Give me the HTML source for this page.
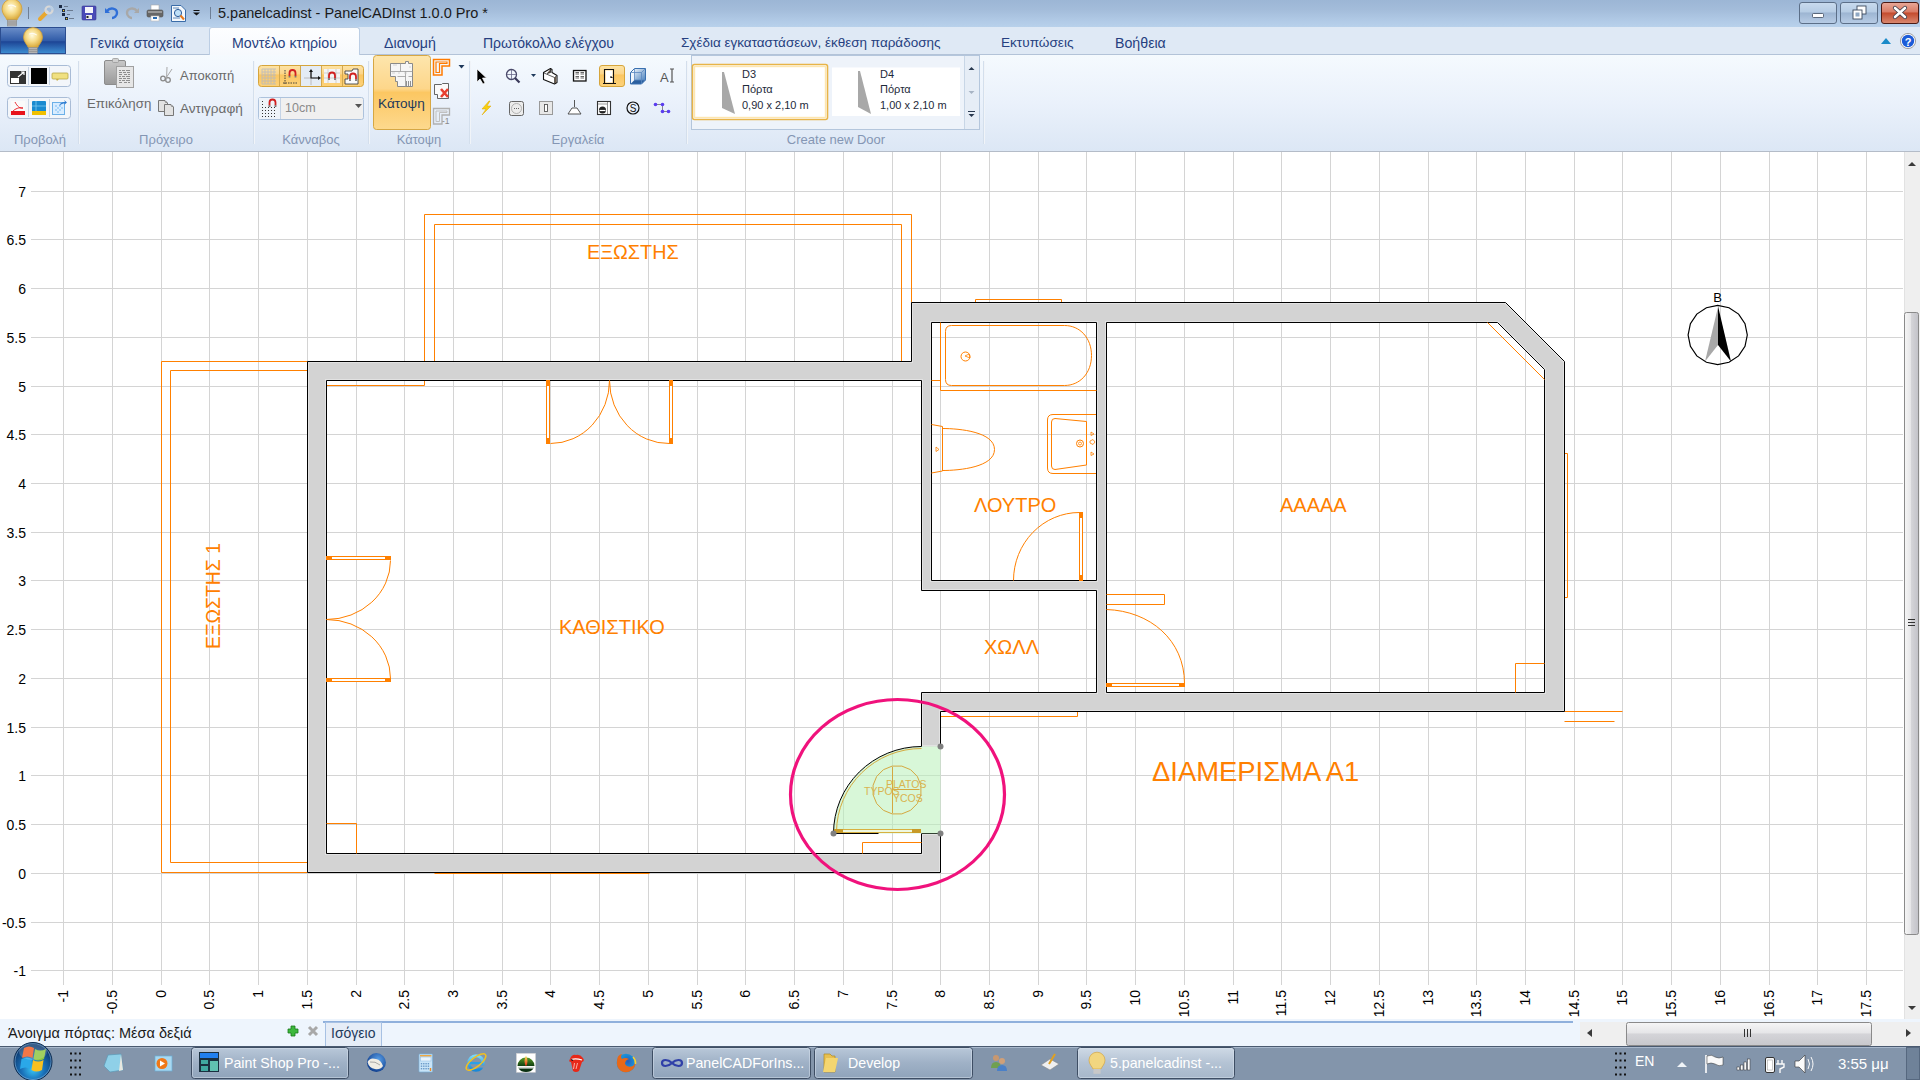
<!DOCTYPE html><html><head><meta charset="utf-8"><style>
*{margin:0;padding:0;box-sizing:border-box}
html,body{width:1920px;height:1080px;overflow:hidden;background:#fff;font-family:"Liberation Sans",sans-serif}
.abs{position:absolute}
#title{left:0;top:0;width:1920px;height:27px;background:linear-gradient(#9cb6d5,#a3bcda 35%,#b2cbe7 80%,#b8d1eb)}
#tabs{left:0;top:27px;width:1920px;height:27px;background:#dfe9f5}
#ribbon{left:0;top:54px;width:1920px;height:98px;background:linear-gradient(#f5fafe,#eaf1fb 50%,#dce7f5);border-top:1px solid #b3c3d8;border-bottom:1px solid #b4bcc8}
.tab{position:absolute;top:35px;font-size:14.2px;color:#263f80;white-space:nowrap}
.glabel{position:absolute;top:132px;font-size:13px;color:#8496b4;white-space:nowrap}
.sep{position:absolute;top:61px;width:2px;height:83px;background:linear-gradient(90deg,#c5d4e6,#fff)}
#canvas{left:0;top:152px;width:1920px;height:867px;background:#fff}
#status{left:0;top:1019px;width:1920px;height:27px;background:#eef5fd}
#taskbar{left:0;top:1046px;width:1920px;height:34px;background:#8395ab}
.tb{position:absolute;top:1047px;height:32px;border:1px solid #4d5f78;border-radius:3px;background:linear-gradient(#b0c0d2,#96aac0 45%,#8aa0b8);box-shadow:inset 0 0 0 1px rgba(255,255,255,.35)}
.tbt{position:absolute;top:1055px;font-size:14.2px;color:#fff;white-space:nowrap}
.rt{font-size:12.5px;color:#333;white-space:nowrap;position:absolute}
</style></head><body>
<div id="title" class="abs"></div>
<div id="tabs" class="abs"></div>
<div id="ribbon" class="abs"></div>
<div id="canvas" class="abs"></div>
<div id="status" class="abs"></div>
<div id="taskbar" class="abs"></div>
<svg class="abs" style="left:0;top:0" width="1920" height="1080" viewBox="0 0 1920 1080"><path d="M63.5 152V985M112.5 152V985M161.5 152V985M209.5 152V985M258.5 152V985M307.5 152V985M356.5 152V985M404.5 152V985M453.5 152V985M502.5 152V985M550.5 152V985M599.5 152V985M648.5 152V985M697.5 152V985M745.5 152V985M794.5 152V985M843.5 152V985M892.5 152V985M940.5 152V985M989.5 152V985M1038.5 152V985M1086.5 152V985M1135.5 152V985M1184.5 152V985M1233.5 152V985M1281.5 152V985M1330.5 152V985M1379.5 152V985M1428.5 152V985M1476.5 152V985M1525.5 152V985M1574.5 152V985M1622.5 152V985M1671.5 152V985M1720.5 152V985M1769.5 152V985M1817.5 152V985M1866.5 152V985M31 970.5H1903M31 922.5H1903M31 873.5H1903M31 824.5H1903M31 775.5H1903M31 727.5H1903M31 678.5H1903M31 629.5H1903M31 580.5H1903M31 532.5H1903M31 483.5H1903M31 434.5H1903M31 386.5H1903M31 337.5H1903M31 288.5H1903M31 239.5H1903M31 191.5H1903" stroke="#d4d4d4" stroke-width="1" fill="none"/><text x="26" y="975.5" font-size="14" text-anchor="end" fill="#000" font-family="Liberation Sans">-1</text><text x="26" y="927.5" font-size="14" text-anchor="end" fill="#000" font-family="Liberation Sans">-0.5</text><text x="26" y="878.5" font-size="14" text-anchor="end" fill="#000" font-family="Liberation Sans">0</text><text x="26" y="829.5" font-size="14" text-anchor="end" fill="#000" font-family="Liberation Sans">0.5</text><text x="26" y="780.5" font-size="14" text-anchor="end" fill="#000" font-family="Liberation Sans">1</text><text x="26" y="732.5" font-size="14" text-anchor="end" fill="#000" font-family="Liberation Sans">1.5</text><text x="26" y="683.5" font-size="14" text-anchor="end" fill="#000" font-family="Liberation Sans">2</text><text x="26" y="634.5" font-size="14" text-anchor="end" fill="#000" font-family="Liberation Sans">2.5</text><text x="26" y="585.5" font-size="14" text-anchor="end" fill="#000" font-family="Liberation Sans">3</text><text x="26" y="537.5" font-size="14" text-anchor="end" fill="#000" font-family="Liberation Sans">3.5</text><text x="26" y="488.5" font-size="14" text-anchor="end" fill="#000" font-family="Liberation Sans">4</text><text x="26" y="439.5" font-size="14" text-anchor="end" fill="#000" font-family="Liberation Sans">4.5</text><text x="26" y="391.5" font-size="14" text-anchor="end" fill="#000" font-family="Liberation Sans">5</text><text x="26" y="342.5" font-size="14" text-anchor="end" fill="#000" font-family="Liberation Sans">5.5</text><text x="26" y="293.5" font-size="14" text-anchor="end" fill="#000" font-family="Liberation Sans">6</text><text x="26" y="244.5" font-size="14" text-anchor="end" fill="#000" font-family="Liberation Sans">6.5</text><text x="26" y="196.5" font-size="14" text-anchor="end" fill="#000" font-family="Liberation Sans">7</text><text transform="translate(67.5,990) rotate(-90)" font-size="14" text-anchor="end" fill="#000" font-family="Liberation Sans">-1</text><text transform="translate(116.5,990) rotate(-90)" font-size="14" text-anchor="end" fill="#000" font-family="Liberation Sans">-0.5</text><text transform="translate(165.5,990) rotate(-90)" font-size="14" text-anchor="end" fill="#000" font-family="Liberation Sans">0</text><text transform="translate(213.5,990) rotate(-90)" font-size="14" text-anchor="end" fill="#000" font-family="Liberation Sans">0.5</text><text transform="translate(262.5,990) rotate(-90)" font-size="14" text-anchor="end" fill="#000" font-family="Liberation Sans">1</text><text transform="translate(311.5,990) rotate(-90)" font-size="14" text-anchor="end" fill="#000" font-family="Liberation Sans">1.5</text><text transform="translate(360.5,990) rotate(-90)" font-size="14" text-anchor="end" fill="#000" font-family="Liberation Sans">2</text><text transform="translate(408.5,990) rotate(-90)" font-size="14" text-anchor="end" fill="#000" font-family="Liberation Sans">2.5</text><text transform="translate(457.5,990) rotate(-90)" font-size="14" text-anchor="end" fill="#000" font-family="Liberation Sans">3</text><text transform="translate(506.5,990) rotate(-90)" font-size="14" text-anchor="end" fill="#000" font-family="Liberation Sans">3.5</text><text transform="translate(554.5,990) rotate(-90)" font-size="14" text-anchor="end" fill="#000" font-family="Liberation Sans">4</text><text transform="translate(603.5,990) rotate(-90)" font-size="14" text-anchor="end" fill="#000" font-family="Liberation Sans">4.5</text><text transform="translate(652.5,990) rotate(-90)" font-size="14" text-anchor="end" fill="#000" font-family="Liberation Sans">5</text><text transform="translate(701.5,990) rotate(-90)" font-size="14" text-anchor="end" fill="#000" font-family="Liberation Sans">5.5</text><text transform="translate(749.5,990) rotate(-90)" font-size="14" text-anchor="end" fill="#000" font-family="Liberation Sans">6</text><text transform="translate(798.5,990) rotate(-90)" font-size="14" text-anchor="end" fill="#000" font-family="Liberation Sans">6.5</text><text transform="translate(847.5,990) rotate(-90)" font-size="14" text-anchor="end" fill="#000" font-family="Liberation Sans">7</text><text transform="translate(896.5,990) rotate(-90)" font-size="14" text-anchor="end" fill="#000" font-family="Liberation Sans">7.5</text><text transform="translate(944.5,990) rotate(-90)" font-size="14" text-anchor="end" fill="#000" font-family="Liberation Sans">8</text><text transform="translate(993.5,990) rotate(-90)" font-size="14" text-anchor="end" fill="#000" font-family="Liberation Sans">8.5</text><text transform="translate(1042.5,990) rotate(-90)" font-size="14" text-anchor="end" fill="#000" font-family="Liberation Sans">9</text><text transform="translate(1090.5,990) rotate(-90)" font-size="14" text-anchor="end" fill="#000" font-family="Liberation Sans">9.5</text><text transform="translate(1139.5,990) rotate(-90)" font-size="14" text-anchor="end" fill="#000" font-family="Liberation Sans">10</text><text transform="translate(1188.5,990) rotate(-90)" font-size="14" text-anchor="end" fill="#000" font-family="Liberation Sans">10.5</text><text transform="translate(1237.5,990) rotate(-90)" font-size="14" text-anchor="end" fill="#000" font-family="Liberation Sans">11</text><text transform="translate(1285.5,990) rotate(-90)" font-size="14" text-anchor="end" fill="#000" font-family="Liberation Sans">11.5</text><text transform="translate(1334.5,990) rotate(-90)" font-size="14" text-anchor="end" fill="#000" font-family="Liberation Sans">12</text><text transform="translate(1383.5,990) rotate(-90)" font-size="14" text-anchor="end" fill="#000" font-family="Liberation Sans">12.5</text><text transform="translate(1432.5,990) rotate(-90)" font-size="14" text-anchor="end" fill="#000" font-family="Liberation Sans">13</text><text transform="translate(1480.5,990) rotate(-90)" font-size="14" text-anchor="end" fill="#000" font-family="Liberation Sans">13.5</text><text transform="translate(1529.5,990) rotate(-90)" font-size="14" text-anchor="end" fill="#000" font-family="Liberation Sans">14</text><text transform="translate(1578.5,990) rotate(-90)" font-size="14" text-anchor="end" fill="#000" font-family="Liberation Sans">14.5</text><text transform="translate(1626.5,990) rotate(-90)" font-size="14" text-anchor="end" fill="#000" font-family="Liberation Sans">15</text><text transform="translate(1675.5,990) rotate(-90)" font-size="14" text-anchor="end" fill="#000" font-family="Liberation Sans">15.5</text><text transform="translate(1724.5,990) rotate(-90)" font-size="14" text-anchor="end" fill="#000" font-family="Liberation Sans">16</text><text transform="translate(1773.5,990) rotate(-90)" font-size="14" text-anchor="end" fill="#000" font-family="Liberation Sans">16.5</text><text transform="translate(1821.5,990) rotate(-90)" font-size="14" text-anchor="end" fill="#000" font-family="Liberation Sans">17</text><text transform="translate(1870.5,990) rotate(-90)" font-size="14" text-anchor="end" fill="#000" font-family="Liberation Sans">17.5</text><path d="M326.5 385.5 L424.5 385.5 L424.5 214.5 L911.5 214.5 L911.5 302.5" stroke="#ff8000" stroke-width="1" fill="none" /><path d="M434.5 361.5 L434.5 224.5 L901.5 224.5 L901.5 361.5" stroke="#ff8000" stroke-width="1" fill="none" /><path d="M307.5 361.5 L161.5 361.5 L161.5 872.5 L307.5 872.5" stroke="#ff8000" stroke-width="1" fill="none" /><path d="M307.5 370.5 L170.5 370.5 L170.5 862.5 L307.5 862.5" stroke="#ff8000" stroke-width="1" fill="none" /><path d="M975.5 302.5 L975.5 299.5 L1061.5 299.5 L1061.5 302.5" stroke="#ff8000" stroke-width="1" fill="none" /><path d="M1564.5 453.5 L1567.5 453.5 L1567.5 597.5 L1564.5 597.5" stroke="#ff8000" stroke-width="1" fill="none" /><path d="M1564.5 711.5 L1622.5 711.5" stroke="#ff8000" stroke-width="1" fill="none" /><path d="M1564.5 721.5 L1614.5 721.5" stroke="#ff8000" stroke-width="1" fill="none" /><path d="M940.5 716.5 L1077.5 716.5 L1077.5 711.5" stroke="#ff8000" stroke-width="1" fill="none" /><path d="M434.5 873.5 L649.5 873.5" stroke="#ff8000" stroke-width="1" fill="none" /><path d="M307.5 361.5 L911.5 361.5 L911.5 302.5 L1505.5 302.5 L1564.5 361.5 L1564.5 711.5 L940.5 711.5 L940.5 746.5 L921.5 746.5 L921.5 833.5 L940.5 833.5 L940.5 872.5 L307.5 872.5 ZM326.5 380.5 L921.5 380.5 L921.5 590.5 L1096.5 590.5 L1096.5 692.5 L921.5 692.5 L921.5 853.5 L326.5 853.5 ZM931.5 322.5 L1096.5 322.5 L1096.5 580.5 L931.5 580.5 ZM1106.5 322.5 L1497.5 322.5 L1544.5 369.5 L1544.5 692.5 L1106.5 692.5 Z" fill="#d3d3d3" fill-rule="evenodd" stroke="none"/><clipPath id="wc"><path d="M307.5 361.5 L911.5 361.5 L911.5 302.5 L1505.5 302.5 L1564.5 361.5 L1564.5 711.5 L940.5 711.5 L940.5 746.5 L921.5 746.5 L921.5 833.5 L940.5 833.5 L940.5 872.5 L307.5 872.5 ZM326.5 380.5 L921.5 380.5 L921.5 590.5 L1096.5 590.5 L1096.5 692.5 L921.5 692.5 L921.5 853.5 L326.5 853.5 ZM931.5 322.5 L1096.5 322.5 L1096.5 580.5 L931.5 580.5 ZM1106.5 322.5 L1497.5 322.5 L1544.5 369.5 L1544.5 692.5 L1106.5 692.5 Z" clip-rule="evenodd"/></clipPath><path d="M307.5 361.5 L911.5 361.5 L911.5 302.5 L1505.5 302.5 L1564.5 361.5 L1564.5 711.5 L940.5 711.5 L940.5 746.5 L921.5 746.5 L921.5 833.5 L940.5 833.5 L940.5 872.5 L307.5 872.5 ZM326.5 380.5 L921.5 380.5 L921.5 590.5 L1096.5 590.5 L1096.5 692.5 L921.5 692.5 L921.5 853.5 L326.5 853.5 ZM931.5 322.5 L1096.5 322.5 L1096.5 580.5 L931.5 580.5 ZM1106.5 322.5 L1497.5 322.5 L1544.5 369.5 L1544.5 692.5 L1106.5 692.5 Z" fill="none" stroke="#e2e2e2" stroke-width="3" clip-path="url(#wc)"/><path d="M940.5 746.5 L940.5 711.5 L1564.5 711.5 L1564.5 361.5 L1505.5 302.5 L911.5 302.5 L911.5 361.5 L307.5 361.5 L307.5 872.5 L940.5 872.5 L940.5 833.5 L921.5 833.5" stroke="#000" stroke-width="1" fill="none" /><path d="M921.5 746.5 L921.5 692.5 L1096.5 692.5 L1096.5 590.5 L921.5 590.5 L921.5 380.5 L326.5 380.5 L326.5 853.5 L921.5 853.5 L921.5 833.5" stroke="#000" stroke-width="1" fill="none" /><path d="M931.5 322.5 L1096.5 322.5 L1096.5 580.5 L931.5 580.5 Z" stroke="#000" stroke-width="1" fill="none" /><path d="M1106.5 322.5 L1497.5 322.5 L1544.5 369.5 L1544.5 692.5 L1106.5 692.5 Z" stroke="#000" stroke-width="1" fill="none" /><path d="M940.5 322.5 L940.5 390.5 L1096.5 390.5" stroke="#ff8000" stroke-width="1" fill="none" /><path d="M931.5 380.5 L940.5 380.5" stroke="#ff8000" stroke-width="1" fill="none" /><path d="M951.5 325.5H1064.5C1080 325.5 1091.5 338 1091.5 355.5C1091.5 373 1080 385.5 1064.5 385.5H951.5Q945.5 385.5 945.5 379.5V331.5Q945.5 325.5 951.5 325.5Z" stroke="#ff8000" fill="none"/><circle cx="965.5" cy="356.5" r="4.5" stroke="#ff8000" fill="none"/><path d="M965 356l4-2 1 4z" stroke="#ff8000" fill="none" stroke-width="0.8"/><path d="M931.5 424.5L942.5 426.5V471L931.5 473" stroke="#ff8000" fill="none"/><path d="M942.5 428.5C960 428.5 994.5 432 994.5 449.5C994.5 467 960 470.5 942.5 470.5" stroke="#ff8000" fill="none"/><path d="M936 447l3 2.5-3 2z" stroke="#ff8000" fill="none" stroke-width="0.8"/><path d="M1096 414.5H1053Q1047.5 414.5 1047.5 420V468Q1047.5 473.5 1053 473.5H1096" stroke="#ff8000" fill="none"/><path d="M1055 418.5L1086.5 421.5V465L1055 469.5Q1051.5 469.5 1051.5 466V422Q1051.5 418.5 1055 418.5Z" stroke="#ff8000" fill="none"/><circle cx="1080" cy="443.5" r="3.5" stroke="#ff8000" fill="none"/><circle cx="1080" cy="443.5" r="1.5" stroke="#ff8000" fill="none" stroke-width="0.8"/><path d="M1091 432l3 2-3 1.5zM1090 441l3-1.5 2 2.5-2 2.5-3-1.5zM1091 452l3 2-3 1.5z" stroke="#ff8000" fill="none" stroke-width="0.8"/><rect x="546.5" y="380.5" width="3" height="63" fill="#fff" stroke="#ff8000"/><rect x="546" y="380" width="4" height="6" fill="#ff8000"/><rect x="546" y="438" width="4" height="6" fill="#ff8000"/><rect x="669.5" y="380.5" width="3" height="63" fill="#fff" stroke="#ff8000"/><rect x="669" y="380" width="4" height="6" fill="#ff8000"/><rect x="669" y="438" width="4" height="6" fill="#ff8000"/><path d="M550.5 443.5A59 63 0 0 0 609.5 380.5A59 63 0 0 0 669.5 443.5" stroke="#ff8000" fill="none"/><rect x="326.5" y="556.5" width="64" height="3" fill="#fff" stroke="#ff8000"/><rect x="326" y="556" width="6" height="4" fill="#ff8000"/><rect x="385" y="556" width="6" height="4" fill="#ff8000"/><rect x="326.5" y="678.5" width="64" height="3" fill="#fff" stroke="#ff8000"/><rect x="326" y="678" width="6" height="4" fill="#ff8000"/><rect x="385" y="678" width="6" height="4" fill="#ff8000"/><path d="M390.5 560.5A64 59 0 0 1 326.5 619.5A64 59 0 0 1 390.5 678.5" stroke="#ff8000" fill="none"/><rect x="1079.5" y="512.5" width="3" height="68" fill="#fff" stroke="#ff8000"/><rect x="1079" y="512" width="4" height="6" fill="#ff8000"/><rect x="1079" y="575" width="4" height="6" fill="#ff8000"/><path d="M1079.5 512.5A66 68 0 0 0 1013.5 580.5" stroke="#ff8000" fill="none"/><rect x="1106.5" y="683.5" width="78" height="3" fill="#fff" stroke="#ff8000"/><rect x="1106" y="683" width="6" height="4" fill="#ff8000"/><rect x="1179" y="683" width="6" height="4" fill="#ff8000"/><path d="M1106.5 609.5C1150 611 1184.5 640 1184.5 683.5" stroke="#ff8000" fill="none"/><path d="M1106.5 594.5 L1164.5 594.5 L1164.5 604.5 L1106.5 604.5" stroke="#ff8000" stroke-width="1" fill="none" /><path d="M1515.5 692.5 L1515.5 663.5 L1544.5 663.5" stroke="#ff8000" stroke-width="1" fill="none" /><path d="M1487.5 322.5 L1544.5 379.5" stroke="#ff8000" stroke-width="1" fill="none" /><path d="M326.5 823.5 L356.5 823.5 L356.5 853.5" stroke="#ff8000" stroke-width="1" fill="none" /><path d="M862.5 853.5 L862.5 842.5 L921.5 842.5" stroke="#ff8000" stroke-width="1" fill="none" /><text x="587" y="259" font-size="19.8" fill="#ff8000" font-family="Liberation Sans" >ΕΞΩΣΤΗΣ</text><text x="559" y="634" font-size="20" fill="#ff8000" font-family="Liberation Sans" >ΚΑΘΙΣΤΙΚΟ</text><text x="974" y="512" font-size="20" fill="#ff8000" font-family="Liberation Sans" >ΛΟΥΤΡΟ</text><text x="1280" y="512" font-size="20" fill="#ff8000" font-family="Liberation Sans" >AAAAA</text><text x="984" y="654" font-size="20" fill="#ff8000" font-family="Liberation Sans" >ΧΩΛΛ</text><text x="1152" y="781" font-size="27.4" fill="#ff8000" font-family="Liberation Sans" >ΔΙΑΜΕΡΙΣΜΑ Α1</text><text transform="translate(220,649) rotate(-90)" font-size="19.4" fill="#ff8000" font-family="Liberation Sans">ΕΞΩΣΤΗΣ 1</text><path d="M833.5 833.5A88 87 0 0 1 921.5 746.5H940.5V833.5Z" fill="#b8f0b8" fill-opacity="0.55" stroke="none"/><path d="M833.5 833.5A88 87 0 0 1 921.5 746.5" fill="none" stroke="#000" stroke-width="1"/><path d="M836.5 831.5A85 84 0 0 1 921.5 748.5" fill="none" stroke="#d4aa40" stroke-width="1"/><rect x="834.5" y="829.5" width="86" height="3" fill="#eef8e0" stroke="#d8b040" stroke-width="1"/><rect x="834" y="829" width="9" height="4" fill="#c89a28"/><rect x="912" y="829" width="9" height="4" fill="#c89a28"/><path d="M834.5 833.5 L878.5 833.5" stroke="#000" stroke-width="1" fill="none" /><polygon points="920.9,794.8 917.3,803.6 910.6,810.3 901.8,813.9 892.2,813.9 883.4,810.3 876.7,803.6 873.1,794.8 873.1,785.2 876.7,776.4 883.4,769.7 892.2,766.1 901.8,766.1 910.6,769.7 917.3,776.4 920.9,785.2" fill="none" stroke="#d4a840" stroke-width="1"/><path d="M892.5 767V813M892.5 789.5H919.5" stroke="#d4a840" stroke-width="1"/><text x="864" y="795" font-size="10.5" fill="#d8b450" font-family="Liberation Sans">TYPOS</text><text x="886" y="788" font-size="10.5" fill="#d8b450" font-family="Liberation Sans">PLATOS</text><text x="893" y="801.5" font-size="10.5" fill="#d8b450" font-family="Liberation Sans">YCOS</text><circle cx="940.5" cy="746.5" r="3" fill="#808080"/><circle cx="940.5" cy="833.5" r="3" fill="#808080"/><circle cx="833.5" cy="833.5" r="3" fill="#808080"/><ellipse cx="897.5" cy="794.5" rx="107" ry="95" fill="none" stroke="#f0127c" stroke-width="3.2"/><polygon points="1747.3,335.0 1745.0,346.3 1738.6,355.9 1729.0,362.3 1717.7,364.6 1706.4,362.3 1696.8,355.9 1690.4,346.3 1688.1,335.0 1690.4,323.7 1696.8,314.1 1706.4,307.7 1717.7,305.4 1729.0,307.7 1738.6,314.1 1745.0,323.7" fill="none" stroke="#000" stroke-width="1.2"/><polygon points="1718,306 1731,361.5 1718,345" fill="#000"/><polygon points="1718,307 1705,361.5 1718,345" fill="#a8a8a8"/><text x="1717.5" y="302" font-size="13" text-anchor="middle" fill="#000" font-family="Liberation Sans">B</text></svg>
<svg class="abs" style="left:0;top:0" width="1920" height="151"><defs>
<radialGradient id="bulb" cx="0.45" cy="0.4" r="0.6"><stop offset="0" stop-color="#fffbe0"/><stop offset="0.5" stop-color="#f6dc8a"/><stop offset="1" stop-color="#d9a93a"/></radialGradient>
<linearGradient id="orbtn" x1="0" y1="0" x2="0" y2="1"><stop offset="0" stop-color="#fde6ad"/><stop offset="0.45" stop-color="#fdd68a"/><stop offset="0.5" stop-color="#fcc762"/><stop offset="1" stop-color="#fdd98e"/></linearGradient>
<linearGradient id="orbtn2" x1="0" y1="0" x2="0" y2="1"><stop offset="0" stop-color="#fde4a6"/><stop offset="0.4" stop-color="#fcd58a"/><stop offset="0.45" stop-color="#fbc661"/><stop offset="1" stop-color="#fdd27a"/></linearGradient>
<linearGradient id="wbtn" x1="0" y1="0" x2="0" y2="1"><stop offset="0" stop-color="#c9dbee"/><stop offset="0.45" stop-color="#b6cce4"/><stop offset="0.5" stop-color="#9db5d2"/><stop offset="1" stop-color="#b8cde6"/></linearGradient>
<linearGradient id="cbtn" x1="0" y1="0" x2="0" y2="1"><stop offset="0" stop-color="#e9a99a"/><stop offset="0.45" stop-color="#d97c66"/><stop offset="0.5" stop-color="#c44b2e"/><stop offset="1" stop-color="#d98a72"/></linearGradient>
<linearGradient id="appbtn" x1="0" y1="0" x2="0" y2="1"><stop offset="0" stop-color="#6b8ec9"/><stop offset="0.5" stop-color="#315ca8"/><stop offset="0.55" stop-color="#1d4596"/><stop offset="1" stop-color="#3e8fd3"/></linearGradient>
<linearGradient id="cube" x1="0" y1="0" x2="1" y2="1"><stop offset="0" stop-color="#e8f0f8"/><stop offset="1" stop-color="#4f85c0"/></linearGradient>
</defs><rect x="0.5" y="27.5" width="65" height="26" fill="url(#appbtn)" stroke="#2b4d90"/><g transform="translate(12,10) scale(1.0)"><path d="M-10 -1 A10 10 0 1 1 10 -1 C10 4 6 7 5 10 H-5 C-6 7 -10 4 -10 -1Z" fill="url(#bulb)" stroke="#d2a03a" stroke-width="0.8"/><path d="M-4 -4 Q0 -6 4 -3" stroke="#fff" stroke-width="1.2" fill="none" opacity="0.8"/><rect x="-4.5" y="10" width="9" height="6" fill="#b8b8b8" stroke="#8a8a8a" stroke-width="0.6"/><path d="M-4.5 12H4.5M-4.5 14H4.5" stroke="#777" stroke-width="0.6"/></g><g transform="translate(33,38) scale(0.95)"><path d="M-10 -1 A10 10 0 1 1 10 -1 C10 4 6 7 5 10 H-5 C-6 7 -10 4 -10 -1Z" fill="url(#bulb)" stroke="#d2a03a" stroke-width="0.8"/><path d="M-4 -4 Q0 -6 4 -3" stroke="#fff" stroke-width="1.2" fill="none" opacity="0.8"/><rect x="-4.5" y="10" width="9" height="6" fill="#b8b8b8" stroke="#8a8a8a" stroke-width="0.6"/><path d="M-4.5 12H4.5M-4.5 14H4.5" stroke="#777" stroke-width="0.6"/></g><path d="M28.5 7V19M210.5 7V19" stroke="#6e7f96" stroke-width="1"/><path d="M40 19 L46 13" stroke="#e8a830" stroke-width="4" stroke-linecap="round"/><path d="M46 13 L48 11" stroke="#ddd" stroke-width="3"/><circle cx="49" cy="10" r="3.5" fill="none" stroke="#d8d8d8" stroke-width="2.2"/><path d="M50 6.5 L53 9.5" stroke="#b9cfe6" stroke-width="2.2"/><g fill="#1b2a44"><rect x="59" y="5" width="3" height="3"/><rect x="62" y="9" width="3" height="3"/><rect x="62" y="13" width="3" height="3"/><rect x="65" y="17" width="3" height="3"/></g><g stroke="#6a7a90" stroke-width="1"><path d="M64 6.5H68M67 10.5H73M67 14.5H70M69 18.5H74"/></g><g fill="#f0c020"><rect x="63" y="10" width="1.2" height="1.2"/><rect x="66" y="18" width="1.2" height="1.2"/></g><rect x="82" y="6" width="14" height="14" rx="1" fill="#4a4ab8" stroke="#3a3a90" stroke-width="0.6"/><rect x="85" y="7" width="8" height="6" fill="#f4f4fa"/><rect x="86" y="15" width="6" height="4" fill="#e8e8e8"/><rect x="86.5" y="16" width="2" height="2" fill="#222"/><path d="M107 11 C110 7 117 8 117 13 C117 16 114 18 112 18" stroke="#2f6fd8" stroke-width="2.4" fill="none"/><path d="M105 8 V13 H110Z" fill="#2f6fd8"/><path d="M137 11 C134 7 127 8 127 13 C127 16 130 18 132 18" stroke="#a8a8a8" stroke-width="2.4" fill="none"/><path d="M139 8 V13 H134Z" fill="#a8a8a8"/><rect x="151" y="5" width="8" height="5" fill="#fff" stroke="#aaa" stroke-width="0.6"/><rect x="147" y="10" width="16" height="7" rx="1.5" fill="#666" stroke="#555" stroke-width="0.6"/><rect x="148" y="11" width="14" height="2" fill="#999"/><rect x="151" y="16" width="8" height="5" fill="#fff" stroke="#bbb" stroke-width="0.6"/><rect x="153" y="17" width="4" height="2" fill="#2a6bb0"/><path d="M171.5 5.5H181L185.5 10V21.5H171.5Z" fill="#f4f8fc" stroke="#3a6ca8" stroke-width="1"/><path d="M173 8H179M173 18H180" stroke="#3a6ca8" stroke-width="0.8"/><circle cx="178" cy="13" r="3.6" fill="#bfe0f8" stroke="#2a5a98" stroke-width="1"/><path d="M180.5 15.5L184 19.5" stroke="#e87818" stroke-width="2"/><path d="M193.5 10.5H199.5" stroke="#111" stroke-width="1"/><path d="M193 12.5H200L196.5 15.5Z" fill="#111"/><rect x="1799.5" y="2.5" width="37" height="21" rx="2.5" fill="url(#wbtn)" stroke="#5c6f88"/><rect x="1812.5" y="13.5" width="11" height="4" rx="1" fill="#fff" stroke="#3c4a5e" stroke-width="0.8"/><rect x="1840.5" y="2.5" width="37" height="21" rx="2.5" fill="url(#wbtn)" stroke="#5c6f88"/><rect x="1857" y="6" width="9" height="8" fill="#fff" stroke="#3c4a5e" stroke-width="0.9"/><rect x="1853" y="10" width="9" height="9" fill="#fff" stroke="#3c4a5e" stroke-width="0.9"/><rect x="1855.5" y="12.5" width="4" height="4" fill="#8fa8c4"/><rect x="1881.5" y="2.5" width="37" height="21" rx="2.5" fill="url(#cbtn)" stroke="#4a1a14"/><path d="M1895 8L1905 17M1905 8L1895 17" stroke="#3c3c4a" stroke-width="4.2" stroke-linecap="round"/><path d="M1895 8L1905 17M1905 8L1895 17" stroke="#fff" stroke-width="2.6" stroke-linecap="round"/><path d="M1881 44H1891L1886 38Z" fill="#1a8ac8"/><circle cx="1908" cy="41" r="7.6" fill="#fff" stroke="#a0a0a0" stroke-width="1"/><circle cx="1908" cy="41" r="6.2" fill="#1c5cd8"/><text x="1908" y="45.5" font-size="11" font-weight="bold" text-anchor="middle" fill="#fff" font-family="Liberation Sans">?</text><rect x="7.5" y="65.5" width="63" height="21" rx="3" fill="#f3f6fa" stroke="#a9bcd6"/><path d="M28.5 67V85M49.5 67V85" stroke="#c6d3e4"/><rect x="7.5" y="97.5" width="63" height="21" rx="3" fill="#f3f6fa" stroke="#a9bcd6"/><path d="M28.5 99V117M49.5 99V117" stroke="#c6d3e4"/><rect x="10" y="71" width="16" height="13" fill="#333"/><rect x="11" y="78" width="8" height="5" fill="#fff"/><path d="M18 77L24 72M21 72H24V75" stroke="#fff" stroke-width="1.2" fill="none"/><rect x="31" y="68" width="16" height="16" fill="#000"/><rect x="52" y="73" width="16" height="6" rx="1" fill="#f0e080" stroke="#b8a848" stroke-width="0.8"/><path d="M56 79L57 81L59 79" fill="#c8b040"/><rect x="11" y="101" width="14" height="14" fill="#fafafa"/><rect x="11" y="111" width="14" height="4" fill="#e8141c"/><path d="M15 102 C17 106 20 109 23 108 C19 107 15 109 13 111" stroke="#e8141c" stroke-width="0.9" fill="none"/><rect x="32" y="101" width="14" height="14" rx="1" fill="#1a8ad0"/><rect x="32" y="111" width="14" height="4" fill="#f0c000"/><path d="M36 101V111M32 106H46" stroke="#7cc8f0" stroke-width="0.8"/><rect x="52.5" y="102.5" width="12" height="12" fill="#d8ecff" stroke="#6cb0e8"/><path d="M55 105h2v2h-2zM59 105h2v2h-2zM57 107h2v2h-2zM61 107h2v2h-2zM55 109h2v2h-2zM59 109h2v2h-2zM57 111h2v2h-2z" fill="#a8d4fa"/><path d="M59 106 C60 103 62 102 65 102 L64 100 L67 102.5 L64 105 L65 103.5 C63 103.5 61 104 59 106Z" fill="#2c7ad0"/><defs><linearGradient id="clip" x1="0" y1="0" x2="0" y2="1"><stop offset="0" stop-color="#c8c8c8"/><stop offset="1" stop-color="#9a9a9a"/></linearGradient></defs><rect x="104.5" y="60.5" width="21" height="24" rx="1.5" fill="url(#clip)" stroke="#8c8c8c"/><rect x="112.5" y="58.5" width="6" height="4" rx="1" fill="#d0d0d0" stroke="#999" stroke-width="0.8"/><rect x="116.5" y="66.5" width="17" height="21" fill="#e6e6e6" stroke="#a0a0a0"/><path d="M119 70.5h2M122 70.5h3M126 70.5h4M119 72.5h3M123 72.5h3M127 72.5h3M119 74.5h3M124 74.5h3M128 74.5h2M119 76.5h2M122 76.5h3M126 76.5h4M119 78.5h3M123 78.5h3M127 78.5h3M119 80.5h2M122 80.5h3M126 80.5h4M119 82.5h3M124 82.5h3M128 82.5h2" stroke="#777" stroke-width="0.8"/><circle cx="163" cy="78.5" r="2.3" fill="none" stroke="#8a8a8a" stroke-width="1.3"/><circle cx="168" cy="80" r="2.3" fill="none" stroke="#8a8a8a" stroke-width="1.3"/><path d="M166.5 79L167 67M166 78L172 69" stroke="#a8a8a8" stroke-width="1"/><path d="M158.5 100.5H165L167.5 103V111.5H158.5Z" fill="#e2e2e2" stroke="#777" stroke-width="1"/><path d="M164.5 104.5H171L173.5 107V115.5H164.5Z" fill="#e2e2e2" stroke="#777" stroke-width="1"/><path d="M165 101.5L166.5 103M171 105.5L172.5 107" stroke="#555" stroke-width="0.8"/><rect x="258.5" y="65.5" width="105" height="21" rx="3" fill="url(#orbtn2)" stroke="#d6a53c"/><rect x="300" y="66" width="21" height="20" fill="#e4ecf5"/><path d="M279.5 66V86M300.5 66V86M321.5 66V86M342.5 66V86" stroke="#d2a850"/><path d="M262 69H276M262 72H276M262 75H276M262 78H276M262 81H276M262 84H276M262 69V84M265 69V84M268 69V84M271 69V84M274 69V84" stroke="#b0b8c8" stroke-width="0.9" opacity="0.8"/><path d="M285 70V85M283 83H297" stroke="#333" stroke-width="0.9" stroke-dasharray="1.5 1"/><path d="M289.5 76.0V73.0A3 3 0 0 1 295.5 73.0V76.0" stroke="#d02020" stroke-width="1.8" fill="none"/><path d="M288.6 75.7h1.8v1.8h-1.8zM294.6 75.7h1.8v1.8h-1.8z" fill="#777"/><path d="M304 78H318M311 72V85" stroke="#b0b0b0" stroke-width="0.8"/><path d="M311 71V78H319" stroke="#111" stroke-width="1.2" fill="none"/><path d="M309 72L311 69L313 72ZM318 76L321 78L318 80Z" fill="#111"/><rect x="324" y="69" width="16" height="14" fill="#f4f4f4"/><path d="M324 73H340M324 78H340M328 69V83M336 69V83" stroke="#c0c0c0" stroke-width="0.7"/><path d="M329 78.5V75.5A3 3 0 0 1 335 75.5V78.5" stroke="#d02020" stroke-width="1.8" fill="none"/><path d="M328.1 78.2h1.8v1.8h-1.8zM334.1 78.2h1.8v1.8h-1.8z" fill="#777"/><path d="M345 71H352L353 69H358V84H345V79H348V74H345Z" fill="#fafafa" stroke="#444" stroke-width="0.9"/><path d="M350 79.5V76.5A3 3 0 0 1 356 76.5V79.5" stroke="#d02020" stroke-width="1.8" fill="none"/><path d="M349.1 79.2h1.8v1.8h-1.8zM355.1 79.2h1.8v1.8h-1.8z" fill="#777"/><rect x="258.5" y="97.5" width="105" height="22" rx="2" fill="#f0f0f0" stroke="#adc2dc"/><rect x="259" y="98" width="21" height="21" fill="#eef3f9"/><path d="M280.5 98V119" stroke="#c4d3e6"/><g fill="#333"><rect x="262" y="107" width="1" height="1"/><rect x="262" y="110" width="1" height="1"/><rect x="262" y="113" width="1" height="1"/><rect x="262" y="116" width="1" height="1"/><rect x="265" y="107" width="1" height="1"/><rect x="265" y="110" width="1" height="1"/><rect x="265" y="113" width="1" height="1"/><rect x="265" y="116" width="1" height="1"/><rect x="268" y="107" width="1" height="1"/><rect x="268" y="110" width="1" height="1"/><rect x="268" y="113" width="1" height="1"/><rect x="268" y="116" width="1" height="1"/><rect x="271" y="107" width="1" height="1"/><rect x="271" y="110" width="1" height="1"/><rect x="271" y="113" width="1" height="1"/><rect x="271" y="116" width="1" height="1"/><rect x="274" y="107" width="1" height="1"/><rect x="274" y="110" width="1" height="1"/><rect x="274" y="113" width="1" height="1"/><rect x="274" y="116" width="1" height="1"/><rect x="262" y="101" width="1" height="1"/><rect x="262" y="104" width="1" height="1"/></g><path d="M269.5 105.5V102.5A3 3 0 0 1 275.5 102.5V105.5" stroke="#d02020" stroke-width="1.8" fill="none"/><path d="M268.6 105.2h1.8v1.8h-1.8zM274.6 105.2h1.8v1.8h-1.8z" fill="#777"/><path d="M355 104H362L358.5 108Z" fill="#555"/><rect x="373.5" y="55.5" width="57" height="74" rx="3" fill="url(#orbtn)" stroke="#d6a744"/><path d="M390.5 63.5H405.5V61.5H408.5V63.5H412.5V86.5H397.5V81.5H395.5V76.5H390.5Z" fill="#f6f6f6" stroke="#8a8a8a" stroke-width="1"/><path d="M400.5 63.5V71.5M390.5 71.5H412.5M405.5 71.5V86.5M397.5 76.5H405.5M408.5 76.5H412.5" stroke="#9a9a9a" stroke-width="0.8" fill="none"/><path d="M406.5 81V86M408.5 81V86M410.5 81V86" stroke="#777" stroke-width="0.8"/><path d="M392 73h3M398 73h2M404 73h3M393 65h4M409 67h2" stroke="#ccc" stroke-width="0.8"/><path d="M433.5 59.5H449.5V66H442V75H433.5Z" fill="none" stroke="#ff7b00" stroke-width="1.5"/><path d="M436 62H447V63.5H439.5V72.5H436Z" fill="none" stroke="#ff7b00" stroke-width="1.2"/><path d="M434.5 84.5H441.5L442.5 83.5H448.5V98.5H437.5V94.5H434.5Z" fill="#fafafa" stroke="#555" stroke-width="0.9"/><path d="M441 89L448 97M448 89L441 97" stroke="#e84030" stroke-width="2.6"/><path d="M433.5 108.5H449.5V115H442V124H433.5Z" fill="none" stroke="#b0b0b0" stroke-width="1.3"/><path d="M436 111H447V112.5H439.5V121.5H436Z" fill="none" stroke="#c0c0c0" stroke-width="1"/><text x="442" y="123.5" font-size="8.5" fill="#888" font-family="Liberation Sans">-1</text><path d="M458.5 65H464.5L461.5 68.5Z" fill="#1e395b"/><path d="M477 69V82L480 79L483 84L485 83L482.5 78H486.5Z" fill="#000" stroke="#fff" stroke-width="0.7"/><circle cx="511.5" cy="74.5" r="5" fill="none" stroke="#4a4a6a" stroke-width="1.3"/><path d="M511.5 70V79M507 74.5H516" stroke="#6a6a8a" stroke-width="0.8"/><path d="M515 78L519.5 82.5" stroke="#3a3a5a" stroke-width="2.2"/><path d="M531 74H536L533.5 77Z" fill="#1e395b"/><path d="M543.5 72.5L550.5 68.5L552 69.5V72.5L557 75.5V82.5L554.5 84L543.5 79.5Z" fill="#fff" stroke="#111" stroke-width="1.1" stroke-linejoin="round"/><path d="M550.5 69V72.5L547 73.5" fill="#5a4a3a" stroke="#222" stroke-width="0.8"/><path d="M544 73L554.5 77.5V84M554.5 77.5L557 75.5" stroke="#333" stroke-width="0.8" fill="none"/><path d="M555.5 77V83" stroke="#6a5a4a" stroke-width="1.4"/><rect x="573.5" y="70.5" width="12.5" height="10.5" fill="#fff" stroke="#111" stroke-width="1.3"/><path d="M575.5 72.5H579M580.5 72.5H584M575.5 74H579M580.5 74H584M575.5 76.5H579M580.5 76.5H584M575.5 78H579M580.5 78H584" stroke="#666" stroke-width="1"/><rect x="599.5" y="65.5" width="25" height="21" rx="2.5" fill="url(#orbtn2)" stroke="#d6a53c"/><path d="M603 83.5H616M604.5 83.5V69.5H613.5V83.5" stroke="#111" stroke-width="1.1" fill="none"/><rect x="605.5" y="70.5" width="7" height="12" fill="#fff"/><path d="M610 77H612V78" stroke="#111" stroke-width="1"/><path d="M634.5 68.5H645.5V80H634.5Z" fill="url(#cube)"/><path d="M630.5 84L634.5 80H645.5L641.5 84Z" fill="#2b5f9f"/><path d="M630.5 72.5L634.5 68.5H645.5V80L641.5 84H630.5Z" fill="none" stroke="#3a70b0" stroke-width="1"/><path d="M630.5 72.5H641.5V84M641.5 72.5L645.5 68.5M634.5 68.5V80H645.5" stroke="#5a88c0" stroke-width="0.8" fill="none"/><text x="660" y="82" font-size="13" fill="#555" font-family="Liberation Sans">A</text><path d="M670 69H674M672 69V82M670 82H674" stroke="#555" stroke-width="1.2"/><path d="M489 101L482 109H486L482 115L491 106H487L490 101Z" fill="#f8d010" stroke="#e0a800" stroke-width="0.5"/><rect x="509.5" y="101.5" width="14" height="14" rx="2" fill="#ececec" stroke="#666"/><circle cx="516.5" cy="108.5" r="5" fill="none" stroke="#aaa" stroke-width="0.9"/><path d="M514 108.5h1M516 108.5h1M518 108.5h1" stroke="#666"/><rect x="539.5" y="101.5" width="13" height="13" fill="#e8e8e8" stroke="#999"/><rect x="544.5" y="104.5" width="3" height="7" fill="#fff" stroke="#555" stroke-width="0.9"/><path d="M574.5 100V107M568 114H581L577 108H572Z" stroke="#444" stroke-width="0.9" fill="#fff"/><rect x="597.5" y="101.5" width="13" height="13" fill="#fff" stroke="#333" stroke-width="1.1"/><path d="M598 104H607" stroke="#999"/><circle cx="602.5" cy="110" r="3.5" fill="#222"/><path d="M599.5 110.5H605.5" stroke="#fff" stroke-width="1.2"/><path d="M607.5 102V114" stroke="#777" stroke-width="0.8"/><circle cx="633" cy="108" r="6" fill="none" stroke="#111" stroke-width="1.2"/><text x="633" y="112" font-size="10" text-anchor="middle" fill="#111" font-family="Liberation Sans">S</text><path d="M655.5 104.5H662.5V111.5H668.5" stroke="#888" stroke-width="1" fill="none"/><g fill="#5a3cf0"><circle cx="655.5" cy="104.5" r="1.8"/><circle cx="662.5" cy="104.5" r="1.8"/><circle cx="662.5" cy="111.5" r="1.8"/><circle cx="668.5" cy="111.5" r="1.8"/></g><rect x="691.5" y="55.5" width="288" height="74" fill="#eef3fa" stroke="#b4c6dc"/><rect x="964.5" y="56" width="14.5" height="73" fill="#e6edf6"/><path d="M964.5 56V129" stroke="#c8d6e6"/><rect x="692.5" y="64.5" width="135" height="55" rx="2" fill="#fff" stroke="#e8b448" stroke-width="1.6"/><rect x="694.5" y="66.5" width="131" height="51" fill="none" stroke="#fde6b0" stroke-width="1.4"/><rect x="832" y="67.5" width="128" height="48.5" fill="#fff"/><path d="M722 72H724L735 114L722 108Z" fill="#a8a8a8"/><path d="M858 71H860L871 114L858 107Z" fill="#a8a8a8"/><text font-size="11" fill="#1e2a3a" font-family="Liberation Sans"><tspan x="742" y="77.5">D3</tspan><tspan x="742" y="93">Πόρτα</tspan><tspan x="742" y="108.5">0,90 x 2,10 m</tspan></text><text font-size="11" fill="#1e2a3a" font-family="Liberation Sans"><tspan x="880" y="77.5">D4</tspan><tspan x="880" y="93">Πόρτα</tspan><tspan x="880" y="108.5">1,00 x 2,10 m</tspan></text><path d="M968.5 70H974.5L971.5 67Z" fill="#2a3a50"/><path d="M968.5 91H974.5L971.5 94Z" fill="#a8b4c4"/><path d="M968 111.5H975" stroke="#2a3a50"/><path d="M968.5 114H974.5L971.5 117Z" fill="#2a3a50"/></svg>
<div class="abs" style="left:218px;top:5px;font-size:14.5px;color:#1a1a1a;white-space:nowrap">5.panelcadinst - PanelCADInst 1.0.0 Pro *</div>
<div class="abs" style="left:209px;top:27px;width:151px;height:28px;background:linear-gradient(#fdfeff,#f6f9fd);border:1px solid #bccee4;border-bottom:none;border-radius:3px 3px 0 0"></div>
<div class="tab" style="left:90px;font-size:14.2px">Γενικά στοιχεία</div>
<div class="tab" style="left:232px;font-size:14.2px">Μοντέλο κτηρίου</div>
<div class="tab" style="left:384px;font-size:14.2px">Διανομή</div>
<div class="tab" style="left:483px;font-size:14.0px">Πρωτόκολλο ελέγχου</div>
<div class="tab" style="left:681px;font-size:13.5px">Σχέδια εγκαταστάσεων, έκθεση παράδοσης</div>
<div class="tab" style="left:1001px;font-size:13.6px">Εκτυπώσεις</div>
<div class="tab" style="left:1115px;font-size:14.2px">Βοήθεια</div>
<div class="sep" style="left:78px"></div>
<div class="sep" style="left:253px"></div>
<div class="sep" style="left:368px"></div>
<div class="sep" style="left:469px"></div>
<div class="sep" style="left:686px"></div>
<div class="sep" style="left:983px"></div>
<div class="glabel" style="left:-60px;width:200px;text-align:center">Προβολή</div>
<div class="glabel" style="left:66px;width:200px;text-align:center">Πρόχειρο</div>
<div class="glabel" style="left:211px;width:200px;text-align:center">Κάνναβος</div>
<div class="glabel" style="left:319px;width:200px;text-align:center">Κάτοψη</div>
<div class="glabel" style="left:478px;width:200px;text-align:center">Εργαλεία</div>
<div class="glabel" style="left:736px;width:200px;text-align:center">Create new Door</div>
<div class="abs" style="left:87px;top:96px;font-size:13.3px;color:#6a6a6a;white-space:nowrap">Επικόληση</div>
<div class="abs" style="left:180px;top:68px;font-size:13px;color:#6a6a6a;white-space:nowrap">Αποκοπή</div>
<div class="abs" style="left:180px;top:101px;font-size:13.6px;color:#6a6a6a;white-space:nowrap">Αντιγραφή</div>
<div class="abs" style="left:285px;top:101px;font-size:12.5px;color:#8a8a8a;white-space:nowrap">10cm</div>
<div class="abs" style="left:378px;top:96px;font-size:13.6px;color:#1e395b;white-space:nowrap">Κάτοψη</div>
<div class="abs" style="left:8px;top:1025px;font-size:14.5px;color:#1a1a1a;white-space:nowrap">Άνοιγμα πόρτας: Μέσα δεξιά</div>
<div class="abs" style="left:323px;top:1021px;width:1250px;height:2px;background:#8fb0dc"></div>
<div class="abs" style="left:325px;top:1022px;width:57px;height:24px;background:#e6edf7;border:1px solid #a7c1e3;border-bottom:none"></div>
<div class="abs" style="left:331px;top:1025px;font-size:14px;color:#1e395b">Ισόγειο</div>
<svg class="abs" style="left:0;top:0" width="1920" height="1080" style="pointer-events:none"><defs>
<linearGradient id="thumbv" x1="0" y1="0" x2="1" y2="0"><stop offset="0" stop-color="#f6f6f6"/><stop offset="0.45" stop-color="#e6e6e8"/><stop offset="0.5" stop-color="#d4d4d8"/><stop offset="1" stop-color="#c2c2c8"/></linearGradient>
<linearGradient id="thumbh" x1="0" y1="0" x2="0" y2="1"><stop offset="0" stop-color="#f6f6f6"/><stop offset="0.45" stop-color="#e6e6e8"/><stop offset="0.5" stop-color="#d4d4d8"/><stop offset="1" stop-color="#c8c8cc"/></linearGradient>
<radialGradient id="orb" cx="0.5" cy="0.7" r="0.6"><stop offset="0" stop-color="#38c8f8"/><stop offset="0.5" stop-color="#1a70b8"/><stop offset="1" stop-color="#0c3a70"/></radialGradient>
<linearGradient id="tbbtn" x1="0" y1="0" x2="0" y2="1"><stop offset="0" stop-color="#b9c8d9"/><stop offset="0.5" stop-color="#9fb1c6"/><stop offset="1" stop-color="#8fa3ba"/></linearGradient>
<linearGradient id="tbbtn2" x1="0" y1="0" x2="0" y2="1"><stop offset="0" stop-color="#cfdae6"/><stop offset="0.5" stop-color="#b4c3d4"/><stop offset="1" stop-color="#a6b7ca"/></linearGradient>
</defs><rect x="1904" y="152" width="16" height="867" fill="#efefef"/><path d="M1904.5 152V1019" stroke="#e2e2e2"/><path d="M1908 166H1916L1912 162Z" fill="#3a3a3a"/><rect x="1904.5" y="312.5" width="14" height="622" rx="2" fill="url(#thumbv)" stroke="#8a8a8a"/><path d="M1908 619.5H1915M1908 622.5H1915M1908 625.5H1915" stroke="#333" stroke-width="1"/><path d="M1908 1006H1916L1912 1010Z" fill="#3a3a3a"/><rect x="1580" y="1022" width="340" height="24" fill="#efefef"/><path d="M1592 1029V1037L1587 1033Z" fill="#3a3a3a"/><path d="M1906 1029V1037L1911 1033Z" fill="#3a3a3a"/><rect x="1626.5" y="1022.5" width="245" height="23" rx="2" fill="url(#thumbh)" stroke="#8a8a8a"/><path d="M1744.5 1029V1037M1747.5 1029V1037M1750.5 1029V1037" stroke="#333"/><path d="M291 1026H295V1029H298V1033H295V1036H291V1033H288V1029H291Z" fill="#3cb83c" stroke="#1a7a1a" stroke-width="0.8"/><path d="M309 1027L317 1035M317 1027L309 1035" stroke="#a8a8a8" stroke-width="3"/><rect x="0" y="1046" width="1920" height="1" fill="#4a5a70"/><rect x="0" y="1047" width="1920" height="1" fill="#a8b8cc"/><circle cx="33" cy="1061.5" r="19" fill="url(#orb)" stroke="#0a2a50" stroke-width="1"/><circle cx="33" cy="1061.5" r="18" fill="none" stroke="#a0c8e8" stroke-width="0.8" opacity="0.6"/><path d="M24 1048Q29 1045 34 1048L32.5 1058Q27.5 1055 22 1058Z" fill="#f05a20"/><path d="M35 1049Q40 1052 46 1049L44 1059Q38.5 1062 33.5 1059Z" fill="#8cc63e"/><path d="M21.5 1059Q27 1056 32 1059L30.5 1069Q25.5 1066 20 1069Z" fill="#2aa8e8"/><path d="M33 1060Q38 1063 43.5 1060L42 1070Q36.5 1073 31.5 1070Z" fill="#f8c020"/><ellipse cx="33" cy="1052" rx="14" ry="8" fill="#fff" opacity="0.18"/><g fill="#111"><rect x="70.0" y="1052.5" width="2" height="2"/><rect x="70.0" y="1059.5" width="2" height="2"/><rect x="70.0" y="1066.5" width="2" height="2"/><rect x="70.0" y="1073.5" width="2" height="2"/><rect x="74.5" y="1052.5" width="2" height="2"/><rect x="74.5" y="1059.5" width="2" height="2"/><rect x="74.5" y="1066.5" width="2" height="2"/><rect x="74.5" y="1073.5" width="2" height="2"/><rect x="79.0" y="1052.5" width="2" height="2"/><rect x="79.0" y="1059.5" width="2" height="2"/><rect x="79.0" y="1066.5" width="2" height="2"/><rect x="79.0" y="1073.5" width="2" height="2"/></g><g fill="#111"><rect x="1615.0" y="1052.5" width="2" height="2"/><rect x="1615.0" y="1059.5" width="2" height="2"/><rect x="1615.0" y="1066.5" width="2" height="2"/><rect x="1615.0" y="1073.5" width="2" height="2"/><rect x="1619.5" y="1052.5" width="2" height="2"/><rect x="1619.5" y="1059.5" width="2" height="2"/><rect x="1619.5" y="1066.5" width="2" height="2"/><rect x="1619.5" y="1073.5" width="2" height="2"/><rect x="1624.0" y="1052.5" width="2" height="2"/><rect x="1624.0" y="1059.5" width="2" height="2"/><rect x="1624.0" y="1066.5" width="2" height="2"/><rect x="1624.0" y="1073.5" width="2" height="2"/></g><path d="M108 1055L121 1054L123 1070L110 1072L104 1066Z" fill="#8fd0e8" stroke="#5a9ab8" stroke-width="0.7"/><path d="M121 1054L123 1070L119 1071Z" fill="#e8e8e0"/><rect x="155" y="1056" width="17" height="15" fill="#a8d8f0" stroke="#6ab0d8" stroke-width="0.7"/><circle cx="162" cy="1063.5" r="5.5" fill="#f07818"/><path d="M160 1060.5V1066.5L165 1063.5Z" fill="#fff"/><rect x="191.5" y="1047.5" width="157" height="31" rx="3" fill="url(#tbbtn)" stroke="#3e4e64"/><rect x="192.5" y="1048.5" width="155" height="29" rx="2" fill="none" stroke="#d8e2ee" stroke-opacity="0.5"/><rect x="652.5" y="1047.5" width="158" height="31" rx="3" fill="url(#tbbtn)" stroke="#3e4e64"/><rect x="653.5" y="1048.5" width="156" height="29" rx="2" fill="none" stroke="#d8e2ee" stroke-opacity="0.5"/><rect x="814.5" y="1047.5" width="158" height="31" rx="3" fill="url(#tbbtn)" stroke="#3e4e64"/><rect x="815.5" y="1048.5" width="156" height="29" rx="2" fill="none" stroke="#d8e2ee" stroke-opacity="0.5"/><rect x="1077.5" y="1047.5" width="157" height="31" rx="3" fill="url(#tbbtn2)" stroke="#3e4e64"/><rect x="1078.5" y="1048.5" width="155" height="29" rx="2" fill="none" stroke="#d8e2ee" stroke-opacity="0.5"/><rect x="199" y="1052" width="20" height="20" fill="#1a3040"/><rect x="200" y="1053" width="18" height="5" fill="#2080f0"/><rect x="201" y="1060" width="7" height="4" fill="#40a8a0"/><rect x="201" y="1066" width="7" height="5" fill="#40a8a0"/><rect x="210" y="1061" width="8" height="10" fill="#60c0b0"/><path d="M662 1063C662 1059 668 1059 672 1063C676 1067 682 1067 682 1063C682 1059 676 1059 672 1063C668 1067 662 1067 662 1063Z" fill="none" stroke="#3040a8" stroke-width="2.2"/><path d="M824 1054H830L832 1056H835V1072H824Z" fill="#e8c050" stroke="#b08a20" stroke-width="0.7"/><path d="M826 1058H838L835 1072H823Z" fill="#f4d670"/><g transform="translate(1097,1061) scale(0.8)"><path d="M-10 -1 A10 10 0 1 1 10 -1 C10 4 6 7 5 10 H-5 C-6 7 -10 4 -10 -1Z" fill="#f2d680" stroke="#d2a03a" stroke-width="0.8"/><rect x="-4.5" y="10" width="9" height="6" fill="#c8c8c8"/></g><defs><radialGradient id="tbird" cx="0.6" cy="0.35" r="0.7"><stop offset="0" stop-color="#5aa0e8"/><stop offset="1" stop-color="#0c3a8a"/></radialGradient><linearGradient id="ieg" x1="0" y1="0" x2="0" y2="1"><stop offset="0" stop-color="#7ad8f8"/><stop offset="1" stop-color="#1a88d8"/></linearGradient><radialGradient id="ffox" cx="0.6" cy="0.4" r="0.6"><stop offset="0" stop-color="#2a5ab8"/><stop offset="0.6" stop-color="#1a90d8"/><stop offset="1" stop-color="#1a90d8"/></radialGradient><linearGradient id="flame" x1="0" y1="0" x2="0" y2="1"><stop offset="0" stop-color="#f8f060"/><stop offset="1" stop-color="#e82010"/></linearGradient><linearGradient id="grn" x1="0" y1="0" x2="0" y2="1"><stop offset="0" stop-color="#5a9a28"/><stop offset="1" stop-color="#104010"/></linearGradient></defs><circle cx="376.4" cy="1062.6" r="9.5" fill="url(#tbird)"/><path d="M367.5 1062Q370 1057 376 1059Q381 1060 383 1066Q380 1070 375 1069Q369 1068 367.5 1062Z" fill="#f0ece4"/><path d="M370 1062Q375 1061 380 1065" stroke="#8a8a8a" stroke-width="0.7" fill="none"/><rect x="419" y="1054" width="13.5" height="18" rx="0.8" fill="#c8e4f8" stroke="#7ab0d8" stroke-width="0.7"/><rect x="420" y="1055" width="11.5" height="1.5" fill="#f0a840"/><rect x="420.5" y="1057" width="10.5" height="4" fill="#eaf4fc" stroke="#8ab8e0" stroke-width="0.5"/><g fill="#6a9ac8"><rect x="420.8" y="1063.0" width="1.4" height="1.4"/><rect x="420.8" y="1065.5" width="1.4" height="1.4"/><rect x="420.8" y="1068.0" width="1.4" height="1.4"/><rect x="423.1" y="1063.0" width="1.4" height="1.4"/><rect x="423.1" y="1065.5" width="1.4" height="1.4"/><rect x="423.1" y="1068.0" width="1.4" height="1.4"/><rect x="425.4" y="1063.0" width="1.4" height="1.4"/><rect x="425.4" y="1065.5" width="1.4" height="1.4"/><rect x="425.4" y="1068.0" width="1.4" height="1.4"/><rect x="427.7" y="1063.0" width="1.4" height="1.4"/><rect x="427.7" y="1065.5" width="1.4" height="1.4"/><rect x="427.7" y="1068.0" width="1.4" height="1.4"/></g><rect x="429.8" y="1068" width="1.4" height="3" fill="#f08a20"/><circle cx="476" cy="1063" r="7.2" fill="none" stroke="url(#ieg)" stroke-width="3"/><rect x="469" y="1062" width="14" height="2.2" fill="#2aa0e8"/><path d="M478 1066.5H484" stroke="#8395ab" stroke-width="2.2"/><ellipse cx="476" cy="1062" rx="12" ry="4.5" transform="rotate(-38 476 1062)" fill="none" stroke="#f0c020" stroke-width="1.5"/><rect x="516.3" y="1053.3" width="19.3" height="19.1" fill="#fff" stroke="#c8c8c8" stroke-width="0.5"/><path d="M517.5 1066A8.5 8.5 0 1 1 534.5 1066Z" fill="url(#grn)"/><rect x="518" y="1066.8" width="16" height="1.2" fill="#d0d8d0"/><path d="M518.5 1068.5H533.5Q531 1072 526 1072Q521 1072 518.5 1068.5Z" fill="#0a3010"/><path d="M526 1055.5Q529 1061 526 1066.5Q523 1061 526 1055.5Z" fill="url(#flame)"/><path d="M570 1059Q572 1054 576 1055Q580 1054 583 1058Q585 1061 582 1062L579 1071Q576 1073 573 1071L571 1062Q568 1062 570 1059Z" fill="#e82818"/><path d="M571 1059.5Q576 1058 582 1060" stroke="#fff" stroke-width="1.3" fill="none"/><path d="M571 1059.5L573 1060.5" stroke="#111" stroke-width="1.2"/><path d="M574.5 1063L573.5 1069M577.5 1063L576 1069" stroke="#fbd0c8" stroke-width="0.8"/><circle cx="626" cy="1063" r="9.3" fill="url(#ffox)"/><path d="M617 1061Q617 1055 622 1054Q620 1057 622 1059Q625 1057 629 1059Q625 1060 625 1064Q627 1068 633 1066Q636 1063 635 1059Q637 1066 632 1070Q627 1074 621 1071Q616 1067 617 1061Z" fill="#e86818"/><path d="M633 1057Q636 1060 635.5 1064" stroke="#f8d030" stroke-width="1.5" fill="none"/><circle cx="996" cy="1058" r="3" fill="#c89870"/><path d="M991 1068Q991 1062 996 1062Q1001 1062 1001 1068Z" fill="#70a050"/><circle cx="1002" cy="1061" r="3" fill="#d0a078"/><path d="M997 1071Q997 1065 1002 1065Q1007 1065 1007 1071Z" fill="#4a80c8"/><path d="M1041 1065L1050 1059L1059 1064L1050 1070Z" fill="#f0f0f0" stroke="#888" stroke-width="0.6"/><path d="M1049 1064L1055 1054" stroke="#e0a020" stroke-width="2"/><path d="M1677 1067H1687L1682 1062Z" fill="#f0f4f8"/><path d="M1706 1055V1073" stroke="#fff" stroke-width="1.6"/><path d="M1707 1056Q1712 1054 1715 1057Q1719 1059 1723 1057V1065Q1719 1067 1715 1064Q1711 1062 1707 1064Z" fill="#fafafa" stroke="#333" stroke-width="0.5"/><g fill="#fafafa" stroke="#333" stroke-width="0.5"><rect x="1737" y="1067" width="2.5" height="3"/><rect x="1740.5" y="1065" width="2.5" height="5"/><rect x="1744" y="1062" width="2.5" height="8"/><rect x="1747.5" y="1059" width="2.5" height="11"/></g><rect x="1765.5" y="1057.5" width="9" height="15" rx="1.5" fill="#fafafa" stroke="#333" stroke-width="1"/><rect x="1767.5" y="1060" width="5" height="10" fill="#fff" stroke="#999" stroke-width="0.5"/><path d="M1778 1060V1064M1782 1060V1064M1776 1064H1784V1067L1780 1069V1073" stroke="#fafafa" stroke-width="1.4" fill="none"/><path d="M1795 1061H1799L1805 1055V1073L1799 1067H1795Z" fill="#fafafa" stroke="#333" stroke-width="0.6"/><path d="M1808 1059Q1811 1064 1808 1069M1811 1057Q1815 1064 1811 1071" stroke="#fafafa" stroke-width="1" fill="none"/><rect x="1906" y="1047" width="14" height="33" fill="#56687f"/><rect x="1907" y="1048" width="12" height="31" fill="#6f8299"/></svg>
<div class="tbt" style="left:224px">Paint Shop Pro -...</div>
<div class="tbt" style="left:686px">PanelCADForIns...</div>
<div class="tbt" style="left:848px">Develop</div>
<div class="tbt" style="left:1110px">5.panelcadinst -...</div>
<div class="abs" style="left:1838px;top:1055px;font-size:15px;color:#fff;white-space:nowrap">3:55 μμ</div>
<div class="abs" style="left:1635px;top:1053px;font-size:14px;color:#fff">EN</div>
</body></html>
